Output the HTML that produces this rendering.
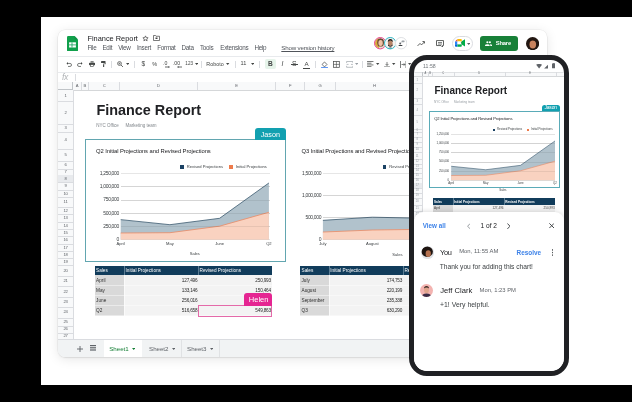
<!DOCTYPE html>
<html><head><meta charset="utf-8"><style>
html,body{margin:0;padding:0}
body{width:632px;height:402px;background:#000;position:relative;overflow:hidden;font-family:"Liberation Sans", sans-serif}
#bg{position:absolute;left:41px;top:17px;width:591px;height:368px;background:#fff}
#card{will-change:transform;position:absolute;left:58px;top:30px;width:489px;height:326.5px;border-radius:7px;background:#fff;box-shadow:0 0 0 .5px rgba(0,0,0,.07),0 1px 2px rgba(0,0,0,.07),0 2px 12px rgba(0,0,0,.10);overflow:hidden}
#phone{position:absolute;left:409px;top:55px;width:160px;height:320.5px;box-sizing:border-box;border:5px solid #202124;border-radius:18px;background:#fff;overflow:hidden}
#screen{will-change:transform;position:absolute;left:0;top:0;width:150px;height:310.5px;overflow:hidden;border-radius:13px}
svg{display:block}
</style></head><body>
<div id="bg"></div>
<div id="card"><svg style="position:absolute;left:9px;top:5.5px" width="11" height="15.5" viewBox="0 0 11 15.5"><path d="M1.2 0H7.6L11 3.4V14.3Q11 15.5 9.8 15.5H1.2Q0 15.5 0 14.3V1.2Q0 0 1.2 0Z" fill="#11a04c"/><path d="M7.6 0L11 3.4H8.6Q7.6 3.4 7.6 2.4Z" fill="#0c7f3d" opacity=".5"/><rect x="2.1" y="6.3" width="6.8" height="5.2" fill="#fff"/><rect x="4.6" y="6.3" width=".8" height="5.2" fill="#0f9d58"/><rect x="2.1" y="8.5" width="6.8" height=".8" fill="#0f9d58"/></svg><div style="position:absolute;left:29.40px;top:5.09px;font-size:7.4px;line-height:7.4px;color:#202124;font-weight:400;white-space:nowrap;">Finance Report</div><svg style="position:absolute;left:83.5px;top:4.799999999999997px" width="7" height="7" viewBox="0 0 24 24"><path d="M12 3l2.6 6 6.4.5-4.9 4.2 1.5 6.3L12 16.7 6.4 20l1.5-6.3L3 9.5 9.4 9z" fill="none" stroke="#444" stroke-width="2.4" stroke-linejoin="round"/></svg><svg style="position:absolute;left:95px;top:5.299999999999997px" width="7" height="6" viewBox="0 0 14 12"><path d="M1 1h4l1 1.5h7V11H1z" fill="none" stroke="#444" stroke-width="1.4"/><rect x="5" y="5" width="4" height="3" fill="#444"/></svg><div style="position:absolute;left:29.40px;top:15.32px;font-size:6.3px;line-height:6.3px;color:#50545a;font-weight:400;white-space:nowrap;letter-spacing:-0.28px;">File</div><div style="position:absolute;left:44.40px;top:15.32px;font-size:6.3px;line-height:6.3px;color:#50545a;font-weight:400;white-space:nowrap;letter-spacing:-0.28px;">Edit</div><div style="position:absolute;left:60.20px;top:15.32px;font-size:6.3px;line-height:6.3px;color:#50545a;font-weight:400;white-space:nowrap;letter-spacing:-0.28px;">View</div><div style="position:absolute;left:78.90px;top:15.32px;font-size:6.3px;line-height:6.3px;color:#50545a;font-weight:400;white-space:nowrap;letter-spacing:-0.28px;">Insert</div><div style="position:absolute;left:99.30px;top:15.32px;font-size:6.3px;line-height:6.3px;color:#50545a;font-weight:400;white-space:nowrap;letter-spacing:-0.28px;">Format</div><div style="position:absolute;left:123.60px;top:15.32px;font-size:6.3px;line-height:6.3px;color:#50545a;font-weight:400;white-space:nowrap;letter-spacing:-0.28px;">Data</div><div style="position:absolute;left:142.00px;top:15.32px;font-size:6.3px;line-height:6.3px;color:#50545a;font-weight:400;white-space:nowrap;letter-spacing:-0.28px;">Tools</div><div style="position:absolute;left:162.30px;top:15.32px;font-size:6.3px;line-height:6.3px;color:#50545a;font-weight:400;white-space:nowrap;letter-spacing:-0.28px;">Extensions</div><div style="position:absolute;left:196.40px;top:15.32px;font-size:6.3px;line-height:6.3px;color:#50545a;font-weight:400;white-space:nowrap;letter-spacing:-0.28px;">Help</div><div style="position:absolute;left:223.30px;top:15.37px;font-size:6.2px;line-height:6.2px;color:#50545a;font-weight:400;white-space:nowrap;letter-spacing:-0.2px;text-decoration:underline;">Show version history</div><div style="position:absolute;left:0.00px;top:25.60px;width:489.00px;height:1.00px;background:#e8eaed;"></div><svg style="position:absolute;left:8.20px;top:31.00px" width="6" height="6.4" viewBox="0 0 12 12"><path d="M3 4.5h5a3 3 0 0 1 0 6H4" fill="none" stroke="#444746" stroke-width="1.4"/><path d="M1 4.5L4 1.8v5.4z" fill="#444746"/></svg><svg style="position:absolute;left:19.40px;top:31.00px" width="6" height="6.4" viewBox="0 0 12 12"><path d="M9 4.5H4a3 3 0 0 0 0 6h4" fill="none" stroke="#444746" stroke-width="1.4"/><path d="M11 4.5L8 1.8v5.4z" fill="#444746"/></svg><svg style="position:absolute;left:30.90px;top:31.20px" width="6.2" height="6.0" viewBox="0 0 14 13"><rect x="3.5" y="0.5" width="7" height="2.5" fill="#444746"/><rect x="0" y="3.5" width="14" height="6" rx="1.8" fill="#444746"/><rect x="3.5" y="8" width="7" height="4.5" fill="#fff" stroke="#444746" stroke-width="1.4"/></svg><svg style="position:absolute;left:42.60px;top:31.10px" width="5.6" height="6.2" viewBox="0 0 13 14"><rect x="0" y="0" width="10" height="4.2" rx=".8" fill="#444746"/><path d="M10 2.1h2v4H6v3" fill="none" stroke="#444746" stroke-width="1.5"/><rect x="4.8" y="8.5" width="2.6" height="5.5" fill="#444746"/></svg><div style="position:absolute;left:53.00px;top:30.50px;width:1.00px;height:7.50px;background:#dadce0;"></div><svg style="position:absolute;left:58.50px;top:31.00px" width="6.5" height="6.5" viewBox="0 0 13 13"><circle cx="5" cy="5" r="3.8" fill="none" stroke="#444746" stroke-width="1.5"/><path d="M8 8l4 4" stroke="#444746" stroke-width="1.6"/><path d="M3 5h4M5 3v4" stroke="#444746" stroke-width="1"/></svg><svg style="position:absolute;left:67.60px;top:33.20px" width="3.4" height="2.0" viewBox="0 0 4 2.2"><path d="M0 0h4L2 2.2z" fill="#444746"/></svg><div style="position:absolute;left:76.00px;top:30.50px;width:1.00px;height:7.50px;background:#dadce0;"></div><div style="position:absolute;left:85.40px;top:31.02px;font-size:6.5px;line-height:6.5px;color:#444746;font-weight:400;white-space:nowrap;transform:translateX(-50%);">$</div><div style="position:absolute;left:96.80px;top:31.51px;font-size:5.5px;line-height:5.5px;color:#444746;font-weight:400;white-space:nowrap;transform:translateX(-50%);">%</div><div style="position:absolute;left:107.20px;top:31.06px;font-size:5.2px;line-height:5.2px;color:#444746;font-weight:400;white-space:nowrap;transform:translateX(-50%);">.0</div><svg style="position:absolute;left:106.50px;top:35.80px" width="5" height="2" viewBox="0 0 5 2"><path d="M0 1h4" stroke="#444746" stroke-width=".8"/><path d="M3.5 0v2l1.5-1z" fill="#444746"/></svg><div style="position:absolute;left:118.50px;top:31.06px;font-size:5.2px;line-height:5.2px;color:#444746;font-weight:400;white-space:nowrap;transform:translateX(-50%);">.00</div><svg style="position:absolute;left:118.50px;top:35.80px" width="5" height="2" viewBox="0 0 5 2"><path d="M1 1h4" stroke="#444746" stroke-width=".8"/><path d="M1.5 0v2L0 1z" fill="#444746"/></svg><div style="position:absolute;left:131.20px;top:32.25px;font-size:4.6px;line-height:4.6px;color:#444746;font-weight:400;white-space:nowrap;transform:translateX(-50%);">123</div><svg style="position:absolute;left:136.60px;top:33.20px" width="3.4" height="2.0" viewBox="0 0 4 2.2"><path d="M0 0h4L2 2.2z" fill="#444746"/></svg><div style="position:absolute;left:143.10px;top:30.50px;width:1.00px;height:7.50px;background:#dadce0;"></div><div style="position:absolute;left:148.30px;top:31.56px;font-size:5.4px;line-height:5.4px;color:#444746;font-weight:400;white-space:nowrap;">Roboto</div><svg style="position:absolute;left:168.40px;top:33.20px" width="3.4" height="2.0" viewBox="0 0 4 2.2"><path d="M0 0h4L2 2.2z" fill="#444746"/></svg><div style="position:absolute;left:176.80px;top:30.50px;width:1.00px;height:7.50px;background:#dadce0;"></div><div style="position:absolute;left:182.50px;top:31.46px;font-size:5.6px;line-height:5.6px;color:#444746;font-weight:400;white-space:nowrap;">11</div><svg style="position:absolute;left:193.10px;top:33.20px" width="3.4" height="2.0" viewBox="0 0 4 2.2"><path d="M0 0h4L2 2.2z" fill="#444746"/></svg><div style="position:absolute;left:200.90px;top:30.50px;width:1.00px;height:7.50px;background:#dadce0;"></div><div style="position:absolute;left:207.00px;top:29.20px;width:10.80px;height:10.10px;background:#e6f4ea;border-radius:2px;"></div><div style="position:absolute;left:212.40px;top:30.98px;font-size:6.6px;line-height:6.6px;color:#444746;font-weight:700;white-space:nowrap;transform:translateX(-50%);">B</div><div style="position:absolute;left:224.40px;top:30.88px;font-size:6.8px;line-height:6.8px;color:#444746;font-weight:400;white-space:nowrap;transform:translateX(-50%);font-style:italic;">I</div><div style="position:absolute;left:236.30px;top:30.88px;font-size:6.8px;line-height:6.8px;color:#444746;font-weight:400;white-space:nowrap;transform:translateX(-50%);">S</div><div style="position:absolute;left:232.60px;top:34.10px;width:7.40px;height:0.60px;background:#444746;"></div><div style="position:absolute;left:248.70px;top:30.57px;font-size:6.2px;line-height:6.2px;color:#444746;font-weight:400;white-space:nowrap;transform:translateX(-50%);">A</div><div style="position:absolute;left:245.00px;top:37.60px;width:7.40px;height:0.90px;background:#444746;"></div><div style="position:absolute;left:256.90px;top:30.50px;width:1.00px;height:7.50px;background:#dadce0;"></div><svg style="position:absolute;left:263.00px;top:30.60px" width="7" height="7.4" viewBox="0 0 14 15"><path d="M2 7l5-5 5 5-5 5z" fill="none" stroke="#444746" stroke-width="1.5"/><rect x="0" y="12.5" width="14" height="2.5" fill="#4285f4"/></svg><svg style="position:absolute;left:275.30px;top:30.90px" width="6.8" height="6.8" viewBox="0 0 14 14"><rect x="1" y="1" width="12" height="12" fill="none" stroke="#444746" stroke-width="1.5"/><path d="M7 1v12M1 7h12" stroke="#444746" stroke-width="1.3"/></svg><svg style="position:absolute;left:287.50px;top:30.90px" width="7.5" height="6.8" viewBox="0 0 15 14"><path d="M1 4V1h13v3M1 10v3h13v-3M1 7h4M10 7h4" fill="none" stroke="#9aa0a6" stroke-width="1.4"/></svg><svg style="position:absolute;left:296.70px;top:33.20px" width="3.4" height="2.0" viewBox="0 0 4 2.2"><path d="M0 0h4L2 2.2z" fill="#9aa0a6"/></svg><div style="position:absolute;left:303.70px;top:30.50px;width:1.00px;height:7.50px;background:#dadce0;"></div><svg style="position:absolute;left:309.20px;top:31.00px" width="6.5" height="6.4" viewBox="0 0 13 13"><path d="M0 1h13M0 4.5h9M0 8h13M0 11.5h9" stroke="#444746" stroke-width="1.5"/></svg><svg style="position:absolute;left:318.30px;top:33.20px" width="3.4" height="2.0" viewBox="0 0 4 2.2"><path d="M0 0h4L2 2.2z" fill="#444746"/></svg><svg style="position:absolute;left:326.00px;top:31.00px" width="6" height="6.4" viewBox="0 0 12 13"><path d="M0 12h12" stroke="#444746" stroke-width="1.4"/><path d="M6 2v7M3 6l3 3 3-3" fill="none" stroke="#444746" stroke-width="1.4"/></svg><svg style="position:absolute;left:334.30px;top:33.20px" width="3.4" height="2.0" viewBox="0 0 4 2.2"><path d="M0 0h4L2 2.2z" fill="#444746"/></svg><svg style="position:absolute;left:341.50px;top:30.80px" width="6.5" height="7" viewBox="0 0 13 14"><path d="M1 0v14M12 0v14M3 7h7M7.5 4.5L10 7 7.5 9.5" fill="none" stroke="#444746" stroke-width="1.4"/></svg><svg style="position:absolute;left:350.30px;top:33.20px" width="3.4" height="2.0" viewBox="0 0 4 2.2"><path d="M0 0h4L2 2.2z" fill="#444746"/></svg><svg style="position:absolute;left:315.80px;top:7.20px" width="12.4" height="12.4" viewBox="0 0 12.4 12.4"><defs><clipPath id="ca1"><circle cx="6.2" cy="6.2" r="5.2"/></clipPath></defs><g clip-path="url(#ca1)"><rect width="12.4" height="12.4" fill="#e7d6c6"/><rect width="5" height="12.4" fill="#d7a93a"/><ellipse cx="6.6" cy="5.4" rx="3.4" ry="4.2" fill="#6b4a33"/><ellipse cx="6.6" cy="6" rx="2.2" ry="2.9" fill="#f0c2a6"/><path d="M2.5 12.4q4-3.6 8 0z" fill="#f3e6dc"/></g><circle cx="6.2" cy="6.2" r="5.7" fill="none" stroke="#e8468c" stroke-width="1"/></svg><svg style="position:absolute;left:326.20px;top:7.20px" width="12.4" height="12.4" viewBox="0 0 12.4 12.4"><defs><clipPath id="ca2"><circle cx="6.2" cy="6.2" r="5.2"/></clipPath></defs><circle cx="6.2" cy="6.2" r="6.2" fill="#fff"/><g clip-path="url(#ca2)"><rect width="12.4" height="12.4" fill="#f4f2ef"/><ellipse cx="6.3" cy="6.2" rx="2.3" ry="2.9" fill="#b58468"/><path d="M3.8 5.2q0-3.2 2.5-3.2t2.5 3.2q-1-1.6-2.5-1.6t-2.5 1.6z" fill="#1e1a18"/><path d="M4 7.2q2.3 3.4 4.6 0v1.6q-2.3 1.8-4.6 0z" fill="#2b2320"/><path d="M1.8 12.4q4.5-4 9 0z" fill="#1f3448"/></g><circle cx="6.2" cy="6.2" r="5.7" fill="none" stroke="#2bb3c2" stroke-width="1"/></svg><svg style="position:absolute;left:337.00px;top:7.20px" width="12.4" height="12.4" viewBox="0 0 12.4 12.4"><circle cx="6.2" cy="6.2" r="6.2" fill="#fff"/><circle cx="6.2" cy="6.2" r="5.7" fill="none" stroke="#dadce0" stroke-width=".9"/><rect x="3.6" y="7.9" width="3.8" height="1.2" rx=".4" fill="#3c4043"/><circle cx="5.2" cy="6.4" r="1" fill="#5f6368"/><rect x="6.6" y="3.4" width="3" height="1.8" rx=".6" fill="#9aa0a6"/><path d="M5.6 5.6l1.6-.8" stroke="#9aa0a6" stroke-width=".5"/></svg><svg style="position:absolute;left:358.60px;top:10.80px" width="8" height="5.4" viewBox="0 0 16 11"><path d="M1 10l5-5 3 3 6-6" fill="none" stroke="#444746" stroke-width="1.8"/><path d="M11 1h4v4" fill="none" stroke="#444746" stroke-width="1.8"/></svg><svg style="position:absolute;left:378.00px;top:9.80px" width="8" height="7.6" viewBox="0 0 16 15"><path d="M1 1h14v10h-2v3l-3-3H1z" fill="none" stroke="#444746" stroke-width="1.7" stroke-linejoin="round"/><path d="M4 5h8M4 8h8" stroke="#444746" stroke-width="1.4"/></svg><div style="position:absolute;left:393.60px;top:6.30px;width:21.80px;height:14.30px;background:#fff;box-sizing:border-box;border:1px solid #dadce0;border-radius:8px;"></div><svg style="position:absolute;left:396.60px;top:9.30px" width="10" height="7.7" viewBox="0 0 20 15.4"><path d="M0 5L5 0v5z" fill="#ea4335"/><path d="M5 0h7q1.5 0 1.5 1.5V5H5z" fill="#fbbc04"/><rect x="0" y="5" width="5" height="5.4" fill="#2684fc"/><path d="M0 10.4h5v5H1.5Q0 15.4 0 13.9z" fill="#0066da"/><path d="M5 10.4h8.5v3.5q0 1.5-1.5 1.5H5z" fill="#00ac47"/><path d="M13.5 4.5l6.5-4.2v14.8l-6.5-4.2z" fill="#00ac47"/><path d="M13.5 5v5.4L11 7.7z" fill="#00832d"/><rect x="5" y="5" width="6.5" height="5.4" fill="#fff"/></svg><svg style="position:absolute;left:408.50px;top:12.60px" width="3.4" height="2.0" viewBox="0 0 4 2.2"><path d="M0 0h4L2 2.2z" fill="#5f6368"/></svg><div style="position:absolute;left:421.90px;top:6.30px;width:37.90px;height:14.50px;background:#188038;border-radius:3px;"></div><svg style="position:absolute;left:426.60px;top:10.90px" width="7.2" height="5.2" viewBox="0 0 14 10"><circle cx="4.6" cy="2.3" r="2.1" fill="#fff"/><circle cx="9.6" cy="2.3" r="2.0" fill="#fff"/><path d="M0 10V8.6Q0 6.2 4.6 6.2T9.2 8.6V10z" fill="#fff"/><path d="M10.2 6.2Q14 6.3 14 8.6V10h-3.7V8.6q0-1.4-.6-2.4z" fill="#fff"/></svg><div style="position:absolute;left:437.80px;top:10.87px;font-size:5.8px;line-height:5.8px;color:#fff;font-weight:700;white-space:nowrap;letter-spacing:-0.2px;">Share</div><svg style="position:absolute;left:467.60px;top:7.20px" width="13.2" height="13.2" viewBox="0 0 13.2 13.2"><circle cx="6.6" cy="6.6" r="6.6" fill="#231712"/><ellipse cx="6.8" cy="7.4" rx="3.3" ry="4" fill="#c9835e"/><path d="M2.5 5q4-4 8.2 0v-1q-4-3.5-8.2 0z" fill="#231712"/></svg><div style="position:absolute;left:0.00px;top:41.70px;width:489.00px;height:1.00px;background:#e8eaed;"></div><div style="position:absolute;left:4.00px;top:43.20px;font-size:8.6px;line-height:8.6px;color:#b0b3b6;font-weight:400;white-space:nowrap;letter-spacing:-0.3px;font-style:italic;font-family:"Liberation Serif",serif;">fx</div><div style="position:absolute;left:17.40px;top:43.50px;width:1.00px;height:7.50px;background:#dadce0;"></div><div style="position:absolute;left:0.00px;top:51.80px;width:489.00px;height:1.00px;background:#e2e3e3;"></div><div style="position:absolute;left:0.00px;top:51.90px;width:489.00px;height:8.60px;background:#f8f9fa;"></div><div style="position:absolute;left:22.50px;top:51.90px;width:1.00px;height:8.60px;background:#dadce0;"></div><div style="position:absolute;left:19.20px;top:54.45px;font-size:4.2px;line-height:4.2px;color:#5f6368;font-weight:400;white-space:nowrap;transform:translateX(-50%);">A</div><div style="position:absolute;left:29.90px;top:51.90px;width:1.00px;height:8.60px;background:#dadce0;"></div><div style="position:absolute;left:26.90px;top:54.45px;font-size:4.2px;line-height:4.2px;color:#5f6368;font-weight:400;white-space:nowrap;transform:translateX(-50%);">B</div><div style="position:absolute;left:61.00px;top:51.90px;width:1.00px;height:8.60px;background:#dadce0;"></div><div style="position:absolute;left:46.15px;top:54.45px;font-size:4.2px;line-height:4.2px;color:#5f6368;font-weight:400;white-space:nowrap;transform:translateX(-50%);">C</div><div style="position:absolute;left:138.80px;top:51.90px;width:1.00px;height:8.60px;background:#dadce0;"></div><div style="position:absolute;left:100.60px;top:54.45px;font-size:4.2px;line-height:4.2px;color:#5f6368;font-weight:400;white-space:nowrap;transform:translateX(-50%);">D</div><div style="position:absolute;left:217.00px;top:51.90px;width:1.00px;height:8.60px;background:#dadce0;"></div><div style="position:absolute;left:178.60px;top:54.45px;font-size:4.2px;line-height:4.2px;color:#5f6368;font-weight:400;white-space:nowrap;transform:translateX(-50%);">E</div><div style="position:absolute;left:246.10px;top:51.90px;width:1.00px;height:8.60px;background:#dadce0;"></div><div style="position:absolute;left:232.25px;top:54.45px;font-size:4.2px;line-height:4.2px;color:#5f6368;font-weight:400;white-space:nowrap;transform:translateX(-50%);">F</div><div style="position:absolute;left:276.80px;top:51.90px;width:1.00px;height:8.60px;background:#dadce0;"></div><div style="position:absolute;left:262.15px;top:54.45px;font-size:4.2px;line-height:4.2px;color:#5f6368;font-weight:400;white-space:nowrap;transform:translateX(-50%);">G</div><div style="position:absolute;left:354.70px;top:51.90px;width:1.00px;height:8.60px;background:#dadce0;"></div><div style="position:absolute;left:316.45px;top:54.45px;font-size:4.2px;line-height:4.2px;color:#5f6368;font-weight:400;white-space:nowrap;transform:translateX(-50%);">H</div><div style="position:absolute;left:0.00px;top:60.00px;width:489.00px;height:0.70px;background:#d5d7d9;"></div><div style="position:absolute;left:0.00px;top:51.90px;width:15.20px;height:8.20px;background:#f8f9fa;"></div><div style="position:absolute;left:14.10px;top:51.90px;width:1.30px;height:8.20px;background:#c0c4c8;"></div><div style="position:absolute;left:0.00px;top:58.80px;width:15.40px;height:1.30px;background:#c0c4c8;"></div><div style="position:absolute;left:0.00px;top:60.10px;width:15.30px;height:249.90px;background:#f8f9fa;"></div><div style="position:absolute;left:0.00px;top:70.70px;width:15.30px;height:0.80px;background:#dadce0;"></div><div style="position:absolute;left:7.60px;top:63.55px;font-size:4.2px;line-height:4.2px;color:#5f6368;font-weight:400;white-space:nowrap;transform:translateX(-50%);letter-spacing:-0.2px;">1</div><div style="position:absolute;left:0.00px;top:94.20px;width:15.30px;height:0.80px;background:#dadce0;"></div><div style="position:absolute;left:7.60px;top:80.60px;font-size:4.2px;line-height:4.2px;color:#5f6368;font-weight:400;white-space:nowrap;transform:translateX(-50%);letter-spacing:-0.2px;">2</div><div style="position:absolute;left:0.00px;top:101.70px;width:15.30px;height:0.80px;background:#dadce0;"></div><div style="position:absolute;left:7.60px;top:96.10px;font-size:4.2px;line-height:4.2px;color:#5f6368;font-weight:400;white-space:nowrap;transform:translateX(-50%);letter-spacing:-0.2px;">3</div><div style="position:absolute;left:0.00px;top:118.60px;width:15.30px;height:0.80px;background:#dadce0;"></div><div style="position:absolute;left:7.60px;top:108.30px;font-size:4.2px;line-height:4.2px;color:#5f6368;font-weight:400;white-space:nowrap;transform:translateX(-50%);letter-spacing:-0.2px;">4</div><div style="position:absolute;left:0.00px;top:131.30px;width:15.30px;height:0.80px;background:#dadce0;"></div><div style="position:absolute;left:7.60px;top:123.10px;font-size:4.2px;line-height:4.2px;color:#5f6368;font-weight:400;white-space:nowrap;transform:translateX(-50%);letter-spacing:-0.2px;">5</div><div style="position:absolute;left:0.00px;top:138.60px;width:15.30px;height:0.80px;background:#dadce0;"></div><div style="position:absolute;left:7.60px;top:133.10px;font-size:4.2px;line-height:4.2px;color:#5f6368;font-weight:400;white-space:nowrap;transform:translateX(-50%);letter-spacing:-0.2px;">6</div><div style="position:absolute;left:0.00px;top:145.10px;width:15.30px;height:0.80px;background:#dadce0;"></div><div style="position:absolute;left:7.60px;top:140.00px;font-size:4.2px;line-height:4.2px;color:#5f6368;font-weight:400;white-space:nowrap;transform:translateX(-50%);letter-spacing:-0.2px;">7</div><div style="position:absolute;left:0.00px;top:145.10px;width:15.30px;height:7.30px;background:#e8eaed;"></div><div style="position:absolute;left:0.00px;top:152.40px;width:15.30px;height:0.80px;background:#dadce0;"></div><div style="position:absolute;left:7.60px;top:146.90px;font-size:4.2px;line-height:4.2px;color:#5f6368;font-weight:400;white-space:nowrap;transform:translateX(-50%);letter-spacing:-0.2px;">8</div><div style="position:absolute;left:0.00px;top:159.60px;width:15.30px;height:0.80px;background:#dadce0;"></div><div style="position:absolute;left:7.60px;top:154.15px;font-size:4.2px;line-height:4.2px;color:#5f6368;font-weight:400;white-space:nowrap;transform:translateX(-50%);letter-spacing:-0.2px;">9</div><div style="position:absolute;left:0.00px;top:167.20px;width:15.30px;height:0.80px;background:#dadce0;"></div><div style="position:absolute;left:7.60px;top:161.55px;font-size:4.2px;line-height:4.2px;color:#5f6368;font-weight:400;white-space:nowrap;transform:translateX(-50%);letter-spacing:-0.2px;">10</div><div style="position:absolute;left:0.00px;top:176.60px;width:15.30px;height:0.80px;background:#dadce0;"></div><div style="position:absolute;left:7.60px;top:170.05px;font-size:4.2px;line-height:4.2px;color:#5f6368;font-weight:400;white-space:nowrap;transform:translateX(-50%);letter-spacing:-0.2px;">11</div><div style="position:absolute;left:0.00px;top:184.40px;width:15.30px;height:0.80px;background:#dadce0;"></div><div style="position:absolute;left:7.60px;top:178.65px;font-size:4.2px;line-height:4.2px;color:#5f6368;font-weight:400;white-space:nowrap;transform:translateX(-50%);letter-spacing:-0.2px;">12</div><div style="position:absolute;left:0.00px;top:191.90px;width:15.30px;height:0.80px;background:#dadce0;"></div><div style="position:absolute;left:7.60px;top:186.30px;font-size:4.2px;line-height:4.2px;color:#5f6368;font-weight:400;white-space:nowrap;transform:translateX(-50%);letter-spacing:-0.2px;">13</div><div style="position:absolute;left:0.00px;top:198.90px;width:15.30px;height:0.80px;background:#dadce0;"></div><div style="position:absolute;left:7.60px;top:193.55px;font-size:4.2px;line-height:4.2px;color:#5f6368;font-weight:400;white-space:nowrap;transform:translateX(-50%);letter-spacing:-0.2px;">14</div><div style="position:absolute;left:0.00px;top:205.80px;width:15.30px;height:0.80px;background:#dadce0;"></div><div style="position:absolute;left:7.60px;top:200.50px;font-size:4.2px;line-height:4.2px;color:#5f6368;font-weight:400;white-space:nowrap;transform:translateX(-50%);letter-spacing:-0.2px;">15</div><div style="position:absolute;left:0.00px;top:213.60px;width:15.30px;height:0.80px;background:#dadce0;"></div><div style="position:absolute;left:7.60px;top:207.85px;font-size:4.2px;line-height:4.2px;color:#5f6368;font-weight:400;white-space:nowrap;transform:translateX(-50%);letter-spacing:-0.2px;">16</div><div style="position:absolute;left:0.00px;top:221.20px;width:15.30px;height:0.80px;background:#dadce0;"></div><div style="position:absolute;left:7.60px;top:215.55px;font-size:4.2px;line-height:4.2px;color:#5f6368;font-weight:400;white-space:nowrap;transform:translateX(-50%);letter-spacing:-0.2px;">17</div><div style="position:absolute;left:0.00px;top:228.40px;width:15.30px;height:0.80px;background:#dadce0;"></div><div style="position:absolute;left:7.60px;top:222.95px;font-size:4.2px;line-height:4.2px;color:#5f6368;font-weight:400;white-space:nowrap;transform:translateX(-50%);letter-spacing:-0.2px;">18</div><div style="position:absolute;left:0.00px;top:235.30px;width:15.30px;height:0.80px;background:#dadce0;"></div><div style="position:absolute;left:7.60px;top:230.00px;font-size:4.2px;line-height:4.2px;color:#5f6368;font-weight:400;white-space:nowrap;transform:translateX(-50%);letter-spacing:-0.2px;">19</div><div style="position:absolute;left:0.00px;top:245.70px;width:15.30px;height:0.80px;background:#dadce0;"></div><div style="position:absolute;left:7.60px;top:238.65px;font-size:4.2px;line-height:4.2px;color:#5f6368;font-weight:400;white-space:nowrap;transform:translateX(-50%);letter-spacing:-0.2px;">20</div><div style="position:absolute;left:0.00px;top:256.10px;width:15.30px;height:0.80px;background:#dadce0;"></div><div style="position:absolute;left:7.60px;top:249.05px;font-size:4.2px;line-height:4.2px;color:#5f6368;font-weight:400;white-space:nowrap;transform:translateX(-50%);letter-spacing:-0.2px;">21</div><div style="position:absolute;left:0.00px;top:266.60px;width:15.30px;height:0.80px;background:#dadce0;"></div><div style="position:absolute;left:7.60px;top:259.50px;font-size:4.2px;line-height:4.2px;color:#5f6368;font-weight:400;white-space:nowrap;transform:translateX(-50%);letter-spacing:-0.2px;">22</div><div style="position:absolute;left:0.00px;top:277.00px;width:15.30px;height:0.80px;background:#dadce0;"></div><div style="position:absolute;left:7.60px;top:269.95px;font-size:4.2px;line-height:4.2px;color:#5f6368;font-weight:400;white-space:nowrap;transform:translateX(-50%);letter-spacing:-0.2px;">23</div><div style="position:absolute;left:0.00px;top:287.50px;width:15.30px;height:0.80px;background:#dadce0;"></div><div style="position:absolute;left:7.60px;top:280.40px;font-size:4.2px;line-height:4.2px;color:#5f6368;font-weight:400;white-space:nowrap;transform:translateX(-50%);letter-spacing:-0.2px;">24</div><div style="position:absolute;left:0.00px;top:295.80px;width:15.30px;height:0.80px;background:#dadce0;"></div><div style="position:absolute;left:7.60px;top:289.80px;font-size:4.2px;line-height:4.2px;color:#5f6368;font-weight:400;white-space:nowrap;transform:translateX(-50%);letter-spacing:-0.2px;">25</div><div style="position:absolute;left:0.00px;top:302.60px;width:15.30px;height:0.80px;background:#dadce0;"></div><div style="position:absolute;left:7.60px;top:297.35px;font-size:4.2px;line-height:4.2px;color:#5f6368;font-weight:400;white-space:nowrap;transform:translateX(-50%);letter-spacing:-0.2px;">26</div><div style="position:absolute;left:0.00px;top:309.30px;width:15.30px;height:0.80px;background:#dadce0;"></div><div style="position:absolute;left:7.60px;top:304.10px;font-size:4.2px;line-height:4.2px;color:#5f6368;font-weight:400;white-space:nowrap;transform:translateX(-50%);letter-spacing:-0.2px;">27</div><div style="position:absolute;left:15.20px;top:60.10px;width:1.00px;height:249.90px;background:#dadce0;"></div><div style="position:absolute;left:38.40px;top:73.17px;font-size:14.4px;line-height:14.4px;color:#202124;font-weight:700;white-space:nowrap;">Finance Report</div><div style="position:absolute;left:38.30px;top:94.30px;font-size:4.5px;line-height:4.5px;color:#80868b;font-weight:400;white-space:nowrap;">NYC Office</div><div style="position:absolute;left:67.40px;top:94.30px;font-size:4.5px;line-height:4.5px;color:#80868b;font-weight:400;white-space:nowrap;">Marketing team</div><div style="position:absolute;left:27.00px;top:109.00px;width:201.30px;height:122.80px;background:#fff;box-sizing:border-box;border:1px solid #62a6b0;"></div><div style="position:absolute;left:196.80px;top:97.80px;width:31.50px;height:12.20px;background:#12a0b0;border-radius:3px 3px 0 0;"></div><div style="position:absolute;left:212.30px;top:100.58px;font-size:7.2px;line-height:7.2px;color:#fff;font-weight:400;white-space:nowrap;transform:translateX(-50%);">Jason</div><div style="position:absolute;left:38.10px;top:118.74px;font-size:5.85px;line-height:5.85px;color:#202124;font-weight:400;white-space:nowrap;letter-spacing:-0.08px;">Q2 Initial Projections and Revised Projections</div><div style="position:absolute;left:122.00px;top:135.00px;width:3.80px;height:3.80px;background:#1b4264;"></div><div style="position:absolute;left:128.80px;top:134.90px;font-size:4.1px;line-height:4.1px;color:#3c4043;font-weight:400;white-space:nowrap;">Revised Projections</div><div style="position:absolute;left:171.30px;top:135.00px;width:3.80px;height:3.80px;background:#ee7b4b;"></div><div style="position:absolute;left:177.90px;top:134.90px;font-size:4.1px;line-height:4.1px;color:#3c4043;font-weight:400;white-space:nowrap;">Initial Projections</div><div style="position:absolute;left:63.00px;top:142.80px;width:149.00px;height:0.80px;background:#e6e6e6;"></div><div style="position:absolute;left:60.90px;top:140.76px;font-size:5.0px;line-height:5.0px;color:#3c4043;font-weight:400;white-space:nowrap;transform:translateX(-100%);letter-spacing:-0.35px;">1,250,000</div><div style="position:absolute;left:63.00px;top:156.10px;width:149.00px;height:0.80px;background:#e6e6e6;"></div><div style="position:absolute;left:60.90px;top:154.06px;font-size:5.0px;line-height:5.0px;color:#3c4043;font-weight:400;white-space:nowrap;transform:translateX(-100%);letter-spacing:-0.35px;">1,000,000</div><div style="position:absolute;left:63.00px;top:169.50px;width:149.00px;height:0.80px;background:#e6e6e6;"></div><div style="position:absolute;left:60.90px;top:167.46px;font-size:5.0px;line-height:5.0px;color:#3c4043;font-weight:400;white-space:nowrap;transform:translateX(-100%);letter-spacing:-0.35px;">750,000</div><div style="position:absolute;left:63.00px;top:182.80px;width:149.00px;height:0.80px;background:#e6e6e6;"></div><div style="position:absolute;left:60.90px;top:180.76px;font-size:5.0px;line-height:5.0px;color:#3c4043;font-weight:400;white-space:nowrap;transform:translateX(-100%);letter-spacing:-0.35px;">500,000</div><div style="position:absolute;left:63.00px;top:196.10px;width:149.00px;height:0.80px;background:#e6e6e6;"></div><div style="position:absolute;left:60.90px;top:194.06px;font-size:5.0px;line-height:5.0px;color:#3c4043;font-weight:400;white-space:nowrap;transform:translateX(-100%);letter-spacing:-0.35px;">250,000</div><div style="position:absolute;left:63.00px;top:209.40px;width:149.00px;height:0.80px;background:#e6e6e6;"></div><div style="position:absolute;left:60.90px;top:207.36px;font-size:5.0px;line-height:5.0px;color:#3c4043;font-weight:400;white-space:nowrap;transform:translateX(-100%);letter-spacing:-0.35px;">0</div><svg style="position:absolute;left:52.00px;top:140.00px" width="170.00" height="75.00"><polygon points="10.70,49.63 59.90,54.69 109.60,48.30 158.90,12.98 158.90,69.80 10.70,69.80" fill="#b1c2cc"/><polygon points="10.70,63.01 59.90,62.71 109.60,56.16 158.90,42.27 158.90,69.80 10.70,69.80" fill="#f9d2c0"/><polyline points="10.70,49.63 59.90,54.69 109.60,48.30 158.90,12.98" fill="none" stroke="#3c5a70" stroke-width="0.8"/><polyline points="10.70,63.01 59.90,62.71 109.60,56.16 158.90,42.27" fill="none" stroke="#ea8a65" stroke-width="0.8"/></svg><div style="position:absolute;left:63.00px;top:156.10px;width:149.00px;height:0.80px;background:rgba(0,0,0,.07);"></div><div style="position:absolute;left:63.00px;top:169.50px;width:149.00px;height:0.80px;background:rgba(0,0,0,.07);"></div><div style="position:absolute;left:63.00px;top:182.80px;width:149.00px;height:0.80px;background:rgba(0,0,0,.07);"></div><div style="position:absolute;left:63.00px;top:196.10px;width:149.00px;height:0.80px;background:rgba(0,0,0,.07);"></div><div style="position:absolute;left:62.70px;top:211.90px;font-size:4.1px;line-height:4.1px;color:#3c4043;font-weight:400;white-space:nowrap;transform:translateX(-50%);">April</div><div style="position:absolute;left:111.90px;top:211.90px;font-size:4.1px;line-height:4.1px;color:#3c4043;font-weight:400;white-space:nowrap;transform:translateX(-50%);">May</div><div style="position:absolute;left:161.60px;top:211.90px;font-size:4.1px;line-height:4.1px;color:#3c4043;font-weight:400;white-space:nowrap;transform:translateX(-50%);">June</div><div style="position:absolute;left:210.90px;top:211.90px;font-size:4.1px;line-height:4.1px;color:#3c4043;font-weight:400;white-space:nowrap;transform:translateX(-50%);">Q2</div><div style="position:absolute;left:136.80px;top:222.40px;font-size:4.1px;line-height:4.1px;color:#3c4043;font-weight:400;white-space:nowrap;transform:translateX(-50%);">Sales</div><div style="position:absolute;left:243.50px;top:118.74px;font-size:5.85px;line-height:5.85px;color:#202124;font-weight:400;white-space:nowrap;letter-spacing:-0.08px;">Q3 Initial Projections and Revised Projections</div><div style="position:absolute;left:324.60px;top:135.30px;width:3.80px;height:3.80px;background:#1b4264;"></div><div style="position:absolute;left:331.30px;top:135.20px;font-size:4.1px;line-height:4.1px;color:#3c4043;font-weight:400;white-space:nowrap;">Revised Projections</div><div style="position:absolute;left:264.80px;top:142.60px;width:147.20px;height:0.80px;background:#e6e6e6;"></div><div style="position:absolute;left:263.10px;top:140.56px;font-size:5.0px;line-height:5.0px;color:#3c4043;font-weight:400;white-space:nowrap;transform:translateX(-100%);letter-spacing:-0.35px;">1,500,000</div><div style="position:absolute;left:264.80px;top:165.00px;width:147.20px;height:0.80px;background:#e6e6e6;"></div><div style="position:absolute;left:263.10px;top:162.96px;font-size:5.0px;line-height:5.0px;color:#3c4043;font-weight:400;white-space:nowrap;transform:translateX(-100%);letter-spacing:-0.35px;">1,000,000</div><div style="position:absolute;left:264.80px;top:187.20px;width:147.20px;height:0.80px;background:#e6e6e6;"></div><div style="position:absolute;left:263.10px;top:185.16px;font-size:5.0px;line-height:5.0px;color:#3c4043;font-weight:400;white-space:nowrap;transform:translateX(-100%);letter-spacing:-0.35px;">500,000</div><div style="position:absolute;left:264.80px;top:209.40px;width:147.20px;height:0.80px;background:#e6e6e6;"></div><div style="position:absolute;left:263.10px;top:207.36px;font-size:5.0px;line-height:5.0px;color:#3c4043;font-weight:400;white-space:nowrap;transform:translateX(-100%);letter-spacing:-0.35px;">0</div><svg style="position:absolute;left:257.00px;top:140.00px" width="165.00" height="75.00"><polygon points="7.90,50.35 57.30,47.20 106.60,48.22 155.90,20.96 155.90,69.80 7.90,69.80" fill="#b1c2cc"/><polygon points="7.90,62.04 57.30,60.02 106.60,59.35 155.90,41.82 155.90,69.80 7.90,69.80" fill="#f9d2c0"/><polyline points="7.90,50.35 57.30,47.20 106.60,48.22 155.90,20.96" fill="none" stroke="#3c5a70" stroke-width="0.8"/><polyline points="7.90,62.04 57.30,60.02 106.60,59.35 155.90,41.82" fill="none" stroke="#ea8a65" stroke-width="0.8"/></svg><div style="position:absolute;left:264.80px;top:165.00px;width:147.20px;height:0.80px;background:rgba(0,0,0,.07);"></div><div style="position:absolute;left:264.80px;top:187.20px;width:147.20px;height:0.80px;background:rgba(0,0,0,.07);"></div><div style="position:absolute;left:264.90px;top:211.90px;font-size:4.1px;line-height:4.1px;color:#3c4043;font-weight:400;white-space:nowrap;transform:translateX(-50%);">July</div><div style="position:absolute;left:314.30px;top:211.90px;font-size:4.1px;line-height:4.1px;color:#3c4043;font-weight:400;white-space:nowrap;transform:translateX(-50%);">August</div><div style="position:absolute;left:363.60px;top:211.90px;font-size:4.1px;line-height:4.1px;color:#3c4043;font-weight:400;white-space:nowrap;transform:translateX(-50%);">September</div><div style="position:absolute;left:412.90px;top:211.90px;font-size:4.1px;line-height:4.1px;color:#3c4043;font-weight:400;white-space:nowrap;transform:translateX(-50%);">Q3</div><div style="position:absolute;left:339.40px;top:222.60px;font-size:4.1px;line-height:4.1px;color:#3c4043;font-weight:400;white-space:nowrap;transform:translateX(-50%);">Sales</div><div style="position:absolute;left:36.90px;top:236.00px;width:177.00px;height:9.00px;background:#113c5b;"></div><div style="position:absolute;left:66.30px;top:236.00px;width:0.60px;height:9.00px;background:#5b7d94;"></div><div style="position:absolute;left:140.40px;top:236.00px;width:0.60px;height:9.00px;background:#5b7d94;"></div><div style="position:absolute;left:38.10px;top:239.10px;font-size:4.7px;line-height:4.7px;color:#fff;font-weight:400;white-space:nowrap;">Sales</div><div style="position:absolute;left:67.50px;top:239.10px;font-size:4.7px;line-height:4.7px;color:#fff;font-weight:400;white-space:nowrap;">Initial Projections</div><div style="position:absolute;left:141.60px;top:239.10px;font-size:4.7px;line-height:4.7px;color:#fff;font-weight:400;white-space:nowrap;">Revised Projections</div><div style="position:absolute;left:36.90px;top:245.00px;width:29.40px;height:10.50px;background:#d9d9d9;"></div><div style="position:absolute;left:66.30px;top:245.00px;width:147.60px;height:10.50px;background:#f3f3f3;"></div><div style="position:absolute;left:36.90px;top:255.00px;width:177.00px;height:1.00px;background:rgba(255,255,255,.45);"></div><div style="position:absolute;left:65.80px;top:245.00px;width:1.00px;height:10.50px;background:rgba(255,255,255,.6);"></div><div style="position:absolute;left:38.10px;top:248.85px;font-size:4.7px;line-height:4.7px;color:#2e2e2e;font-weight:400;white-space:nowrap;">April</div><div style="position:absolute;left:139.40px;top:248.85px;font-size:4.7px;line-height:4.7px;color:#2a2a2a;font-weight:400;white-space:nowrap;transform:translateX(-100%);letter-spacing:-0.2px;">127,496</div><div style="position:absolute;left:212.90px;top:248.85px;font-size:4.7px;line-height:4.7px;color:#2a2a2a;font-weight:400;white-space:nowrap;transform:translateX(-100%);letter-spacing:-0.2px;">250,993</div><div style="position:absolute;left:36.90px;top:255.50px;width:29.40px;height:10.00px;background:#d9d9d9;"></div><div style="position:absolute;left:66.30px;top:255.50px;width:147.60px;height:10.00px;background:#f3f3f3;"></div><div style="position:absolute;left:36.90px;top:265.00px;width:177.00px;height:1.00px;background:rgba(255,255,255,.45);"></div><div style="position:absolute;left:65.80px;top:255.50px;width:1.00px;height:10.00px;background:rgba(255,255,255,.6);"></div><div style="position:absolute;left:38.10px;top:259.10px;font-size:4.7px;line-height:4.7px;color:#2e2e2e;font-weight:400;white-space:nowrap;">May</div><div style="position:absolute;left:139.40px;top:259.10px;font-size:4.7px;line-height:4.7px;color:#2a2a2a;font-weight:400;white-space:nowrap;transform:translateX(-100%);letter-spacing:-0.2px;">133,146</div><div style="position:absolute;left:212.90px;top:259.10px;font-size:4.7px;line-height:4.7px;color:#2a2a2a;font-weight:400;white-space:nowrap;transform:translateX(-100%);letter-spacing:-0.2px;">150,464</div><div style="position:absolute;left:36.90px;top:265.50px;width:29.40px;height:10.00px;background:#d9d9d9;"></div><div style="position:absolute;left:66.30px;top:265.50px;width:147.60px;height:10.00px;background:#f3f3f3;"></div><div style="position:absolute;left:36.90px;top:275.00px;width:177.00px;height:1.00px;background:rgba(255,255,255,.45);"></div><div style="position:absolute;left:65.80px;top:265.50px;width:1.00px;height:10.00px;background:rgba(255,255,255,.6);"></div><div style="position:absolute;left:38.10px;top:269.10px;font-size:4.7px;line-height:4.7px;color:#2e2e2e;font-weight:400;white-space:nowrap;">June</div><div style="position:absolute;left:139.40px;top:269.10px;font-size:4.7px;line-height:4.7px;color:#2a2a2a;font-weight:400;white-space:nowrap;transform:translateX(-100%);letter-spacing:-0.2px;">256,016</div><div style="position:absolute;left:36.90px;top:275.50px;width:29.40px;height:10.00px;background:#d9d9d9;"></div><div style="position:absolute;left:66.30px;top:275.50px;width:147.60px;height:10.00px;background:#f3f3f3;"></div><div style="position:absolute;left:36.90px;top:285.00px;width:177.00px;height:1.00px;background:rgba(255,255,255,.45);"></div><div style="position:absolute;left:65.80px;top:275.50px;width:1.00px;height:10.00px;background:rgba(255,255,255,.6);"></div><div style="position:absolute;left:38.10px;top:279.10px;font-size:4.7px;line-height:4.7px;color:#2e2e2e;font-weight:400;white-space:nowrap;">Q2</div><div style="position:absolute;left:139.40px;top:279.10px;font-size:4.7px;line-height:4.7px;color:#2a2a2a;font-weight:400;white-space:nowrap;transform:translateX(-100%);letter-spacing:-0.2px;">516,658</div><div style="position:absolute;left:212.90px;top:279.10px;font-size:4.7px;line-height:4.7px;color:#2a2a2a;font-weight:400;white-space:nowrap;transform:translateX(-100%);letter-spacing:-0.2px;">549,863</div><div style="position:absolute;left:242.30px;top:236.00px;width:179.70px;height:9.00px;background:#113c5b;"></div><div style="position:absolute;left:271.10px;top:236.00px;width:0.60px;height:9.00px;background:#5b7d94;"></div><div style="position:absolute;left:345.20px;top:236.00px;width:0.60px;height:9.00px;background:#5b7d94;"></div><div style="position:absolute;left:243.50px;top:239.10px;font-size:4.7px;line-height:4.7px;color:#fff;font-weight:400;white-space:nowrap;">Sales</div><div style="position:absolute;left:272.30px;top:239.10px;font-size:4.7px;line-height:4.7px;color:#fff;font-weight:400;white-space:nowrap;">Initial Projections</div><div style="position:absolute;left:346.40px;top:239.10px;font-size:4.7px;line-height:4.7px;color:#fff;font-weight:400;white-space:nowrap;">Revised Projections</div><div style="position:absolute;left:242.30px;top:245.00px;width:28.80px;height:10.50px;background:#d9d9d9;"></div><div style="position:absolute;left:271.10px;top:245.00px;width:150.90px;height:10.50px;background:#f3f3f3;"></div><div style="position:absolute;left:242.30px;top:255.00px;width:179.70px;height:1.00px;background:rgba(255,255,255,.45);"></div><div style="position:absolute;left:270.60px;top:245.00px;width:1.00px;height:10.50px;background:rgba(255,255,255,.6);"></div><div style="position:absolute;left:243.50px;top:248.85px;font-size:4.7px;line-height:4.7px;color:#2e2e2e;font-weight:400;white-space:nowrap;">July</div><div style="position:absolute;left:344.20px;top:248.85px;font-size:4.7px;line-height:4.7px;color:#2a2a2a;font-weight:400;white-space:nowrap;transform:translateX(-100%);letter-spacing:-0.2px;">174,753</div><div style="position:absolute;left:421.00px;top:248.85px;font-size:4.7px;line-height:4.7px;color:#2a2a2a;font-weight:400;white-space:nowrap;transform:translateX(-100%);letter-spacing:-0.2px;">300,000</div><div style="position:absolute;left:242.30px;top:255.50px;width:28.80px;height:10.00px;background:#d9d9d9;"></div><div style="position:absolute;left:271.10px;top:255.50px;width:150.90px;height:10.00px;background:#f3f3f3;"></div><div style="position:absolute;left:242.30px;top:265.00px;width:179.70px;height:1.00px;background:rgba(255,255,255,.45);"></div><div style="position:absolute;left:270.60px;top:255.50px;width:1.00px;height:10.00px;background:rgba(255,255,255,.6);"></div><div style="position:absolute;left:243.50px;top:259.10px;font-size:4.7px;line-height:4.7px;color:#2e2e2e;font-weight:400;white-space:nowrap;">August</div><div style="position:absolute;left:344.20px;top:259.10px;font-size:4.7px;line-height:4.7px;color:#2a2a2a;font-weight:400;white-space:nowrap;transform:translateX(-100%);letter-spacing:-0.2px;">220,199</div><div style="position:absolute;left:421.00px;top:259.10px;font-size:4.7px;line-height:4.7px;color:#2a2a2a;font-weight:400;white-space:nowrap;transform:translateX(-100%);letter-spacing:-0.2px;">288,801</div><div style="position:absolute;left:242.30px;top:265.50px;width:28.80px;height:10.00px;background:#d9d9d9;"></div><div style="position:absolute;left:271.10px;top:265.50px;width:150.90px;height:10.00px;background:#f3f3f3;"></div><div style="position:absolute;left:242.30px;top:275.00px;width:179.70px;height:1.00px;background:rgba(255,255,255,.45);"></div><div style="position:absolute;left:270.60px;top:265.50px;width:1.00px;height:10.00px;background:rgba(255,255,255,.6);"></div><div style="position:absolute;left:243.50px;top:269.10px;font-size:4.7px;line-height:4.7px;color:#2e2e2e;font-weight:400;white-space:nowrap;">September</div><div style="position:absolute;left:344.20px;top:269.10px;font-size:4.7px;line-height:4.7px;color:#2a2a2a;font-weight:400;white-space:nowrap;transform:translateX(-100%);letter-spacing:-0.2px;">235,338</div><div style="position:absolute;left:421.00px;top:269.10px;font-size:4.7px;line-height:4.7px;color:#2a2a2a;font-weight:400;white-space:nowrap;transform:translateX(-100%);letter-spacing:-0.2px;">250,801</div><div style="position:absolute;left:242.30px;top:275.50px;width:28.80px;height:10.00px;background:#d9d9d9;"></div><div style="position:absolute;left:271.10px;top:275.50px;width:150.90px;height:10.00px;background:#f3f3f3;"></div><div style="position:absolute;left:242.30px;top:285.00px;width:179.70px;height:1.00px;background:rgba(255,255,255,.45);"></div><div style="position:absolute;left:270.60px;top:275.50px;width:1.00px;height:10.00px;background:rgba(255,255,255,.6);"></div><div style="position:absolute;left:243.50px;top:279.10px;font-size:4.7px;line-height:4.7px;color:#2e2e2e;font-weight:400;white-space:nowrap;">Q3</div><div style="position:absolute;left:344.20px;top:279.10px;font-size:4.7px;line-height:4.7px;color:#2a2a2a;font-weight:400;white-space:nowrap;transform:translateX(-100%);letter-spacing:-0.2px;">630,290</div><div style="position:absolute;left:421.00px;top:279.10px;font-size:4.7px;line-height:4.7px;color:#2a2a2a;font-weight:400;white-space:nowrap;transform:translateX(-100%);letter-spacing:-0.2px;">839,602</div><div style="position:absolute;left:139.80px;top:275.30px;width:74.50px;height:11.30px;background:transparent;box-sizing:border-box;border:1px solid #e46aa9;"></div><div style="position:absolute;left:185.60px;top:263.30px;width:28.70px;height:12.30px;background:#e52592;border-radius:3px 3px 0 0;"></div><div style="position:absolute;left:200.60px;top:265.94px;font-size:7.5px;line-height:7.5px;color:#fff;font-weight:400;white-space:nowrap;transform:translateX(-50%);">Helen</div><div style="position:absolute;left:0.00px;top:309.50px;width:489.00px;height:17.50px;background:#f1f3f4;"></div><div style="position:absolute;left:0.00px;top:309.20px;width:489.00px;height:0.80px;background:#dadce0;"></div><svg style="position:absolute;left:19.10px;top:315.50px" width="6" height="6" viewBox="0 0 6 6"><path d="M3 0v6M0 3h6" stroke="#5f6368" stroke-width=".9"/></svg><svg style="position:absolute;left:31.50px;top:315.40px" width="6" height="5.6" viewBox="0 0 6 5.6"><rect x="0" y="0" width="6" height="1.2" fill="#5f6368"/><rect x="0" y="2.2" width="6" height="1.2" fill="#5f6368"/><rect x="0" y="4.4" width="6" height="1.2" fill="#5f6368"/></svg><div style="position:absolute;left:46.30px;top:310.00px;width:38.00px;height:17.00px;background:#fff;"></div><div style="position:absolute;left:51.30px;top:315.57px;font-size:6.2px;line-height:6.2px;color:#188038;font-weight:400;white-space:nowrap;letter-spacing:-0.05px;">Sheet1</div><svg style="position:absolute;left:73.80px;top:317.50px" width="3.4" height="2.0" viewBox="0 0 4 2.2"><path d="M0 0h4L2 2.2z" fill="#188038"/></svg><div style="position:absolute;left:122.70px;top:310.00px;width:0.80px;height:17.00px;background:#e0e2e4;"></div><div style="position:absolute;left:160.50px;top:310.00px;width:0.80px;height:17.00px;background:#e0e2e4;"></div><div style="position:absolute;left:91.10px;top:315.57px;font-size:6.2px;line-height:6.2px;color:#5f6368;font-weight:400;white-space:nowrap;letter-spacing:-0.05px;">Sheet2</div><svg style="position:absolute;left:113.60px;top:317.50px" width="3.4" height="2.0" viewBox="0 0 4 2.2"><path d="M0 0h4L2 2.2z" fill="#5f6368"/></svg><div style="position:absolute;left:129.10px;top:315.57px;font-size:6.2px;line-height:6.2px;color:#5f6368;font-weight:400;white-space:nowrap;letter-spacing:-0.05px;">Sheet3</div><svg style="position:absolute;left:151.70px;top:317.50px" width="3.4" height="2.0" viewBox="0 0 4 2.2"><path d="M0 0h4L2 2.2z" fill="#5f6368"/></svg></div>
<div id="phone"><div id="screen"><div style="position:absolute;left:9.10px;top:4.06px;font-size:5.2px;line-height:5.2px;color:#70757a;font-weight:400;white-space:nowrap;">11:58</div><svg style="position:absolute;left:121.80px;top:4.20px" width="6.2" height="4.4" viewBox="0 0 12 9"><path d="M0 1.5Q6-2 12 1.5L6 9z" fill="#5f6368"/></svg><svg style="position:absolute;left:129.60px;top:4.00px" width="4.8" height="4.6" viewBox="0 0 10 10"><path d="M10 0v10H0z" fill="#5f6368"/></svg><svg style="position:absolute;left:137.80px;top:3.20px" width="3.4" height="5.4" viewBox="0 0 7 11"><rect x="1.5" y="0" width="4" height="1.5" fill="#5f6368"/><rect x="0" y="1" width="7" height="10" rx="1" fill="#5f6368"/></svg><div style="position:absolute;left:0.00px;top:12.00px;width:150.00px;height:5.00px;background:#f8f9fa;"></div><div style="position:absolute;left:0.00px;top:11.80px;width:150.00px;height:0.50px;background:#e0e2e4;"></div><div style="position:absolute;left:14.00px;top:12.00px;width:0.70px;height:5.00px;background:#dadce0;"></div><div style="position:absolute;left:11.25px;top:13.33px;font-size:2.6px;line-height:2.6px;color:#5f6368;font-weight:400;white-space:nowrap;transform:translateX(-50%);">A</div><div style="position:absolute;left:18.40px;top:12.00px;width:0.70px;height:5.00px;background:#dadce0;"></div><div style="position:absolute;left:16.20px;top:13.33px;font-size:2.6px;line-height:2.6px;color:#5f6368;font-weight:400;white-space:nowrap;transform:translateX(-50%);">B</div><div style="position:absolute;left:39.80px;top:12.00px;width:0.70px;height:5.00px;background:#dadce0;"></div><div style="position:absolute;left:29.10px;top:13.33px;font-size:2.6px;line-height:2.6px;color:#5f6368;font-weight:400;white-space:nowrap;transform:translateX(-50%);">C</div><div style="position:absolute;left:90.60px;top:12.00px;width:0.70px;height:5.00px;background:#dadce0;"></div><div style="position:absolute;left:65.20px;top:13.33px;font-size:2.6px;line-height:2.6px;color:#5f6368;font-weight:400;white-space:nowrap;transform:translateX(-50%);">D</div><div style="position:absolute;left:141.80px;top:12.00px;width:0.70px;height:5.00px;background:#dadce0;"></div><div style="position:absolute;left:116.20px;top:13.33px;font-size:2.6px;line-height:2.6px;color:#5f6368;font-weight:400;white-space:nowrap;transform:translateX(-50%);">E</div><div style="position:absolute;left:161.00px;top:12.00px;width:0.70px;height:5.00px;background:#dadce0;"></div><div style="position:absolute;left:151.40px;top:13.33px;font-size:2.6px;line-height:2.6px;color:#5f6368;font-weight:400;white-space:nowrap;transform:translateX(-50%);">F</div><div style="position:absolute;left:7.60px;top:12.00px;width:1.00px;height:5.00px;background:#c0c4c8;"></div><div style="position:absolute;left:0.00px;top:16.40px;width:150.00px;height:0.70px;background:#d5d7d9;"></div><div style="position:absolute;left:0.00px;top:17.00px;width:8.50px;height:293.00px;background:#f8f9fa;"></div><div style="position:absolute;left:0.00px;top:23.40px;width:8.50px;height:0.60px;background:#dadce0;"></div><div style="position:absolute;left:3.20px;top:18.83px;font-size:2.8px;line-height:2.8px;color:#9aa0a6;font-weight:400;white-space:nowrap;transform:translateX(-50%);">1</div><div style="position:absolute;left:0.00px;top:38.10px;width:8.50px;height:0.60px;background:#dadce0;"></div><div style="position:absolute;left:3.20px;top:29.38px;font-size:2.8px;line-height:2.8px;color:#9aa0a6;font-weight:400;white-space:nowrap;transform:translateX(-50%);">2</div><div style="position:absolute;left:0.00px;top:44.40px;width:8.50px;height:0.60px;background:#dadce0;"></div><div style="position:absolute;left:3.20px;top:39.88px;font-size:2.8px;line-height:2.8px;color:#9aa0a6;font-weight:400;white-space:nowrap;transform:translateX(-50%);">3</div><div style="position:absolute;left:0.00px;top:55.40px;width:8.50px;height:0.60px;background:#dadce0;"></div><div style="position:absolute;left:3.20px;top:48.53px;font-size:2.8px;line-height:2.8px;color:#9aa0a6;font-weight:400;white-space:nowrap;transform:translateX(-50%);">4</div><div style="position:absolute;left:0.00px;top:68.70px;width:8.50px;height:0.60px;background:#dadce0;"></div><div style="position:absolute;left:3.20px;top:60.68px;font-size:2.8px;line-height:2.8px;color:#9aa0a6;font-weight:400;white-space:nowrap;transform:translateX(-50%);">5</div><div style="position:absolute;left:0.00px;top:72.00px;width:8.50px;height:0.60px;background:#dadce0;"></div><div style="position:absolute;left:3.20px;top:68.98px;font-size:2.8px;line-height:2.8px;color:#9aa0a6;font-weight:400;white-space:nowrap;transform:translateX(-50%);">6</div><div style="position:absolute;left:0.00px;top:76.90px;width:8.50px;height:0.60px;background:#dadce0;"></div><div style="position:absolute;left:3.20px;top:73.08px;font-size:2.8px;line-height:2.8px;color:#9aa0a6;font-weight:400;white-space:nowrap;transform:translateX(-50%);">7</div><div style="position:absolute;left:0.00px;top:81.80px;width:8.50px;height:0.60px;background:#dadce0;"></div><div style="position:absolute;left:3.20px;top:77.98px;font-size:2.8px;line-height:2.8px;color:#9aa0a6;font-weight:400;white-space:nowrap;transform:translateX(-50%);">8</div><div style="position:absolute;left:0.00px;top:86.70px;width:8.50px;height:0.60px;background:#dadce0;"></div><div style="position:absolute;left:3.20px;top:82.88px;font-size:2.8px;line-height:2.8px;color:#9aa0a6;font-weight:400;white-space:nowrap;transform:translateX(-50%);">9</div><div style="position:absolute;left:0.00px;top:92.40px;width:8.50px;height:0.60px;background:#dadce0;"></div><div style="position:absolute;left:3.20px;top:88.18px;font-size:2.8px;line-height:2.8px;color:#9aa0a6;font-weight:400;white-space:nowrap;transform:translateX(-50%);">10</div><div style="position:absolute;left:0.00px;top:99.40px;width:8.50px;height:0.60px;background:#dadce0;"></div><div style="position:absolute;left:3.20px;top:94.53px;font-size:2.8px;line-height:2.8px;color:#9aa0a6;font-weight:400;white-space:nowrap;transform:translateX(-50%);">11</div><div style="position:absolute;left:0.00px;top:103.90px;width:8.50px;height:0.60px;background:#dadce0;"></div><div style="position:absolute;left:3.20px;top:100.28px;font-size:2.8px;line-height:2.8px;color:#9aa0a6;font-weight:400;white-space:nowrap;transform:translateX(-50%);">12</div><div style="position:absolute;left:0.00px;top:108.30px;width:8.50px;height:0.60px;background:#dadce0;"></div><div style="position:absolute;left:3.20px;top:104.73px;font-size:2.8px;line-height:2.8px;color:#9aa0a6;font-weight:400;white-space:nowrap;transform:translateX(-50%);">13</div><div style="position:absolute;left:0.00px;top:113.30px;width:8.50px;height:0.60px;background:#dadce0;"></div><div style="position:absolute;left:3.20px;top:109.43px;font-size:2.8px;line-height:2.8px;color:#9aa0a6;font-weight:400;white-space:nowrap;transform:translateX(-50%);">14</div><div style="position:absolute;left:0.00px;top:118.30px;width:8.50px;height:0.60px;background:#dadce0;"></div><div style="position:absolute;left:3.20px;top:114.43px;font-size:2.8px;line-height:2.8px;color:#9aa0a6;font-weight:400;white-space:nowrap;transform:translateX(-50%);">15</div><div style="position:absolute;left:0.00px;top:123.20px;width:8.50px;height:0.60px;background:#dadce0;"></div><div style="position:absolute;left:3.20px;top:119.38px;font-size:2.8px;line-height:2.8px;color:#9aa0a6;font-weight:400;white-space:nowrap;transform:translateX(-50%);">16</div><div style="position:absolute;left:0.00px;top:123.20px;width:8.50px;height:4.90px;background:#e8eaed;"></div><div style="position:absolute;left:0.00px;top:128.10px;width:8.50px;height:0.60px;background:#dadce0;"></div><div style="position:absolute;left:3.20px;top:124.28px;font-size:2.8px;line-height:2.8px;color:#9aa0a6;font-weight:400;white-space:nowrap;transform:translateX(-50%);">17</div><div style="position:absolute;left:0.00px;top:133.00px;width:8.50px;height:0.60px;background:#dadce0;"></div><div style="position:absolute;left:3.20px;top:129.18px;font-size:2.8px;line-height:2.8px;color:#9aa0a6;font-weight:400;white-space:nowrap;transform:translateX(-50%);">18</div><div style="position:absolute;left:0.00px;top:138.00px;width:8.50px;height:0.60px;background:#dadce0;"></div><div style="position:absolute;left:3.20px;top:134.13px;font-size:2.8px;line-height:2.8px;color:#9aa0a6;font-weight:400;white-space:nowrap;transform:translateX(-50%);">19</div><div style="position:absolute;left:0.00px;top:144.70px;width:8.50px;height:0.60px;background:#dadce0;"></div><div style="position:absolute;left:3.20px;top:139.98px;font-size:2.8px;line-height:2.8px;color:#9aa0a6;font-weight:400;white-space:nowrap;transform:translateX(-50%);">20</div><div style="position:absolute;left:0.00px;top:151.40px;width:8.50px;height:0.60px;background:#dadce0;"></div><div style="position:absolute;left:3.20px;top:146.68px;font-size:2.8px;line-height:2.8px;color:#9aa0a6;font-weight:400;white-space:nowrap;transform:translateX(-50%);">21</div><div style="position:absolute;left:0.00px;top:158.00px;width:8.50px;height:0.60px;background:#dadce0;"></div><div style="position:absolute;left:3.20px;top:153.33px;font-size:2.8px;line-height:2.8px;color:#9aa0a6;font-weight:400;white-space:nowrap;transform:translateX(-50%);">22</div><div style="position:absolute;left:8.40px;top:17.00px;width:0.60px;height:293.00px;background:#dadce0;"></div><div style="position:absolute;left:20.40px;top:25.62px;font-size:10.0px;line-height:10.0px;color:#202124;font-weight:700;white-space:nowrap;">Finance Report</div><div style="position:absolute;left:20.10px;top:40.73px;font-size:3.0px;line-height:3.0px;color:#9aa0a6;font-weight:400;white-space:nowrap;">NYC Office</div><div style="position:absolute;left:40.00px;top:40.73px;font-size:3.0px;line-height:3.0px;color:#9aa0a6;font-weight:400;white-space:nowrap;">Marketing team</div><div style="position:absolute;left:15.30px;top:50.90px;width:130.50px;height:77.00px;background:#fff;box-sizing:border-box;border:0.8px solid #5aabb8;"></div><div style="position:absolute;left:127.60px;top:44.70px;width:18.20px;height:6.80px;background:#12a0b0;border-radius:2.5px 2.5px 0 0;"></div><div style="position:absolute;left:136.70px;top:45.81px;font-size:4.9px;line-height:4.9px;color:#fff;font-weight:400;white-space:nowrap;transform:translateX(-50%);letter-spacing:-0.1px;">Jason</div><div style="position:absolute;left:20.20px;top:56.50px;font-size:4.1px;line-height:4.1px;color:#202124;font-weight:400;white-space:nowrap;letter-spacing:-0.1px;">Q2 Initial Projections and Revised Projections</div><div style="position:absolute;left:78.50px;top:68.50px;width:2.50px;height:2.50px;background:#1b4264;"></div><div style="position:absolute;left:83.00px;top:68.41px;font-size:2.85px;line-height:2.85px;color:#3c4043;font-weight:400;white-space:nowrap;">Revised Projections</div><div style="position:absolute;left:112.70px;top:68.50px;width:2.50px;height:2.50px;background:#ee7b4b;"></div><div style="position:absolute;left:117.10px;top:68.41px;font-size:2.85px;line-height:2.85px;color:#3c4043;font-weight:400;white-space:nowrap;">Initial Projections</div><div style="position:absolute;left:37.20px;top:73.90px;width:103.60px;height:0.60px;background:#e3e3e3;"></div><div style="position:absolute;left:35.20px;top:72.81px;font-size:2.85px;line-height:2.85px;color:#3c4043;font-weight:400;white-space:nowrap;transform:translateX(-100%);">1,250,000</div><div style="position:absolute;left:37.20px;top:83.10px;width:103.60px;height:0.60px;background:#e3e3e3;"></div><div style="position:absolute;left:35.20px;top:82.01px;font-size:2.85px;line-height:2.85px;color:#3c4043;font-weight:400;white-space:nowrap;transform:translateX(-100%);">1,000,000</div><div style="position:absolute;left:37.20px;top:92.30px;width:103.60px;height:0.60px;background:#e3e3e3;"></div><div style="position:absolute;left:35.20px;top:91.21px;font-size:2.85px;line-height:2.85px;color:#3c4043;font-weight:400;white-space:nowrap;transform:translateX(-100%);">750,000</div><div style="position:absolute;left:37.20px;top:101.50px;width:103.60px;height:0.60px;background:#e3e3e3;"></div><div style="position:absolute;left:35.20px;top:100.41px;font-size:2.85px;line-height:2.85px;color:#3c4043;font-weight:400;white-space:nowrap;transform:translateX(-100%);">500,000</div><div style="position:absolute;left:37.20px;top:110.70px;width:103.60px;height:0.60px;background:#e3e3e3;"></div><div style="position:absolute;left:35.20px;top:109.61px;font-size:2.85px;line-height:2.85px;color:#3c4043;font-weight:400;white-space:nowrap;transform:translateX(-100%);">250,000</div><div style="position:absolute;left:37.20px;top:119.90px;width:103.60px;height:0.60px;background:#e3e3e3;"></div><div style="position:absolute;left:35.20px;top:118.81px;font-size:2.85px;line-height:2.85px;color:#3c4043;font-weight:400;white-space:nowrap;transform:translateX(-100%);">0</div><svg style="position:absolute;left:31.00px;top:70.00px" width="115.00" height="55.00"><polygon points="6.20,36.27 40.70,39.76 75.50,35.35 110.00,10.95 110.00,50.20 6.20,50.20" fill="#b1c2cc"/><polygon points="6.20,45.51 40.70,45.30 75.50,40.78 110.00,31.19 110.00,50.20 6.20,50.20" fill="#f9d2c0"/><polyline points="6.20,36.27 40.70,39.76 75.50,35.35 110.00,10.95" fill="none" stroke="#3c5a70" stroke-width="0.6"/><polyline points="6.20,45.51 40.70,45.30 75.50,40.78 110.00,31.19" fill="none" stroke="#ea8a65" stroke-width="0.6"/></svg><div style="position:absolute;left:37.20px;top:83.10px;width:103.60px;height:0.60px;background:rgba(0,0,0,.07);"></div><div style="position:absolute;left:37.20px;top:92.30px;width:103.60px;height:0.60px;background:rgba(0,0,0,.07);"></div><div style="position:absolute;left:37.20px;top:101.50px;width:103.60px;height:0.60px;background:rgba(0,0,0,.07);"></div><div style="position:absolute;left:37.20px;top:110.70px;width:103.60px;height:0.60px;background:rgba(0,0,0,.07);"></div><div style="position:absolute;left:37.20px;top:121.81px;font-size:2.85px;line-height:2.85px;color:#3c4043;font-weight:400;white-space:nowrap;transform:translateX(-50%);">April</div><div style="position:absolute;left:71.70px;top:121.81px;font-size:2.85px;line-height:2.85px;color:#3c4043;font-weight:400;white-space:nowrap;transform:translateX(-50%);">May</div><div style="position:absolute;left:106.50px;top:121.81px;font-size:2.85px;line-height:2.85px;color:#3c4043;font-weight:400;white-space:nowrap;transform:translateX(-50%);">June</div><div style="position:absolute;left:141.00px;top:121.81px;font-size:2.85px;line-height:2.85px;color:#3c4043;font-weight:400;white-space:nowrap;transform:translateX(-50%);">Q2</div><div style="position:absolute;left:88.90px;top:129.01px;font-size:2.85px;line-height:2.85px;color:#3c4043;font-weight:400;white-space:nowrap;transform:translateX(-50%);">Sales</div><div style="position:absolute;left:19.10px;top:138.10px;width:122.30px;height:6.70px;background:#113c5b;"></div><div style="position:absolute;left:20.00px;top:140.59px;font-size:3.1px;line-height:3.1px;color:#fff;font-weight:700;white-space:nowrap;">Sales</div><div style="position:absolute;left:40.00px;top:140.59px;font-size:3.1px;line-height:3.1px;color:#fff;font-weight:700;white-space:nowrap;">Initial Projections</div><div style="position:absolute;left:91.20px;top:140.59px;font-size:3.1px;line-height:3.1px;color:#fff;font-weight:700;white-space:nowrap;">Revised Projections</div><div style="position:absolute;left:39.10px;top:138.10px;width:0.40px;height:6.70px;background:#5b7d94;"></div><div style="position:absolute;left:90.30px;top:138.10px;width:0.40px;height:6.70px;background:#5b7d94;"></div><div style="position:absolute;left:19.10px;top:144.80px;width:20.10px;height:13.20px;background:#d9d9d9;"></div><div style="position:absolute;left:39.20px;top:144.80px;width:102.20px;height:13.20px;background:#f3f3f3;"></div><div style="position:absolute;left:20.00px;top:147.09px;font-size:3.1px;line-height:3.1px;color:#434343;font-weight:400;white-space:nowrap;">April</div><div style="position:absolute;left:89.60px;top:147.09px;font-size:3.1px;line-height:3.1px;color:#434343;font-weight:400;white-space:nowrap;transform:translateX(-100%);">127,496</div><div style="position:absolute;left:140.70px;top:147.09px;font-size:3.1px;line-height:3.1px;color:#434343;font-weight:400;white-space:nowrap;transform:translateX(-100%);">250,993</div><div style="position:absolute;left:0.00px;top:152.30px;width:150.00px;height:159.70px;background:#fff;border-radius:9px 9px 0 0;box-shadow:0 -1px 4px rgba(0,0,0,.13);"></div><div style="position:absolute;left:8.70px;top:163.22px;font-size:6.3px;line-height:6.3px;color:#3d82e8;font-weight:700;white-space:nowrap;">View all</div><svg style="position:absolute;left:52.60px;top:162.60px" width="3.6" height="6.4" viewBox="0 0 4 7"><path d="M3.5 .5L.7 3.5l2.8 3" fill="none" stroke="#80868b" stroke-width=".9"/></svg><div style="position:absolute;left:66.50px;top:162.68px;font-size:6.6px;line-height:6.6px;color:#202124;font-weight:400;white-space:nowrap;">1 of 2</div><svg style="position:absolute;left:92.60px;top:162.60px" width="3.6" height="6.4" viewBox="0 0 4 7"><path d="M.5 .5l2.8 3-2.8 3" fill="none" stroke="#3c4043" stroke-width="1.05"/></svg><svg style="position:absolute;left:135.10px;top:163.30px" width="5.4" height="5.4" viewBox="0 0 6 6"><path d="M.4 .4l5.2 5.2M5.6 .4L.4 5.6" stroke="#3c4043" stroke-width="1.05"/></svg><svg style="position:absolute;left:6.50px;top:185.70px" width="13.1" height="13.1" viewBox="0 0 13 13"><defs><clipPath id="cy"><circle cx="6.5" cy="6.5" r="6.5"/></clipPath></defs><g clip-path="url(#cy)"><rect width="13" height="13" fill="#dfe3e8"/><ellipse cx="6.2" cy="5.6" rx="5.6" ry="5.2" fill="#1e1410"/><ellipse cx="7.2" cy="7.6" rx="2.6" ry="3.3" fill="#b5714f"/><path d="M3 14q4-3.4 8.5 0z" fill="#e8ddd6"/></g></svg><div style="position:absolute;left:26.00px;top:188.99px;font-size:7.4px;line-height:7.4px;color:#202124;font-weight:400;white-space:nowrap;letter-spacing:-0.3px;">You</div><div style="position:absolute;left:45.20px;top:189.42px;font-size:5.9px;line-height:5.9px;color:#5f6368;font-weight:400;white-space:nowrap;">Mon, 11:55 AM</div><div style="position:absolute;left:102.60px;top:189.87px;font-size:6.4px;line-height:6.4px;color:#3d82e8;font-weight:700;white-space:nowrap;">Resolve</div><svg style="position:absolute;left:137.60px;top:189.20px" width="1.8" height="7.0" viewBox="0 0 1.8 7"><circle cx=".9" cy=".9" r=".85" fill="#3c4043"/><circle cx=".9" cy="3.5" r=".85" fill="#3c4043"/><circle cx=".9" cy="6.1" r=".85" fill="#3c4043"/></svg><div style="position:absolute;left:25.80px;top:203.75px;font-size:6.65px;line-height:6.65px;color:#3c4043;font-weight:400;white-space:nowrap;">Thank you for adding this chart!</div><svg style="position:absolute;left:6.40px;top:223.80px" width="13.0" height="13.0" viewBox="0 0 13 13"><defs><clipPath id="cj"><circle cx="6.5" cy="6.5" r="6.5"/></clipPath></defs><g clip-path="url(#cj)"><rect width="13" height="13" fill="#f3b3b0"/><ellipse cx="6.5" cy="6.2" rx="2.4" ry="2.9" fill="#e0a58c"/><path d="M4 4.6q0-2.6 2.5-2.6t2.5 2.6q-1-1.2-2.5-1.2T4 4.6z" fill="#3a2a22"/><path d="M1.5 13.5q0-4 5-4t5 4z" fill="#3b2b45"/></g></svg><div style="position:absolute;left:26.30px;top:227.09px;font-size:7.6px;line-height:7.6px;color:#202124;font-weight:400;white-space:nowrap;">Jeff Clark</div><div style="position:absolute;left:65.60px;top:227.64px;font-size:5.85px;line-height:5.85px;color:#5f6368;font-weight:400;white-space:nowrap;">Mon, 1:23 PM</div><div style="position:absolute;left:26.00px;top:241.63px;font-size:6.9px;line-height:6.9px;color:#3c4043;font-weight:400;white-space:nowrap;">+1! Very helpful.</div></div></div>
</body></html>
